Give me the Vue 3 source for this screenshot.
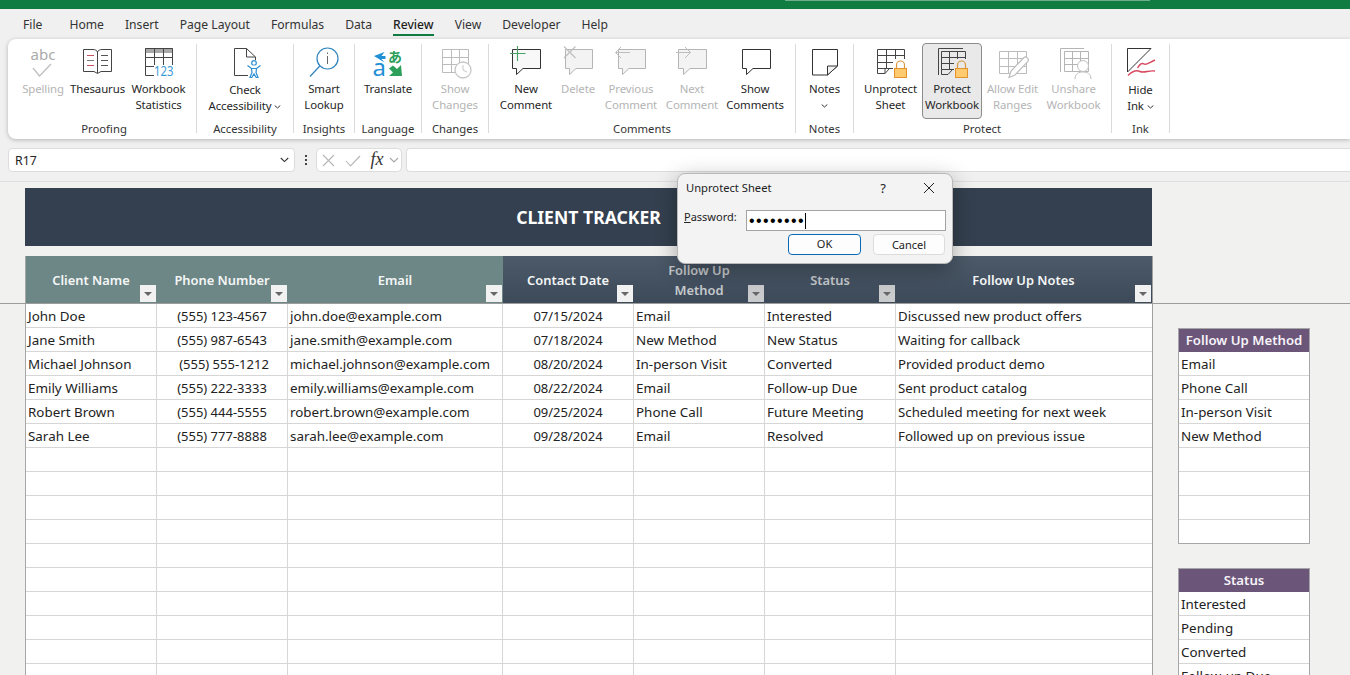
<script setup>
const tabs = ['File','Home','Insert','Page Layout','Formulas','Data','Review','View','Developer','Help']

function grid(x, y, w, h, c, r) {
  let d = `M${x} ${y}H${x + w}V${y + h}H${x}Z`
  for (let i = 1; i < c; i++) { const p = Math.round(x + (w * i) / c - 0.5) + 0.5; d += `M${p} ${y}V${y + h}` }
  for (let i = 1; i < r; i++) { const p = Math.round(y + (h * i) / r - 0.5) + 0.5; d += `M${x} ${p}H${x + w}` }
  return d
}
function bubble(x1, y1, x2, y2, tx) {
  return `M${x1} ${y1}H${x2}V${y2}H${tx + 6.5}L${tx} ${y2 + 6}V${y2}H${x1}Z`
}
const gr = {
  stats: grid(9.5, 4.5, 27, 27, 3, 3),
  changes: grid(9.5, 5.5, 26, 23, 3, 3),
  unprotect: grid(9.5, 5.5, 27, 19, 3, 3),
  protect: grid(11.5, 7.5, 24, 18, 3, 3),
  allow: grid(9.5, 7.5, 27, 22, 3, 3),
  unshare: grid(13.5, 7.5, 24, 20, 3, 3)
}
const bub = {
  add: bubble(8.5, 5.5, 36.5, 24.5, 12.5),
  del: bubble(9.5, 5.5, 36.5, 24.5, 13.5),
  prev: bubble(9.5, 5.5, 36.5, 24.5, 13.5),
  next: bubble(8.5, 5.5, 36.5, 24.5, 13.5),
  show: bubble(9.5, 5.5, 37.5, 24.5, 13.5)
}

const groups = [
  { name:'Proofing', w:189, pl:8, pr:5, gap:0, items:[
    { lines:['Spelling'], w:54, icon:'spell', off:true },
    { lines:['Thesaurus'], w:55, icon:'book' },
    { lines:['Workbook','Statistics'], w:67, icon:'stats' } ] },
  { name:'Accessibility', w:97, pl:0, pr:1, gap:0, items:[
    { lines:['Check','Accessibility'], w:96, icon:'access', low:true, chev:'inline' } ] },
  { name:'Insights', w:61, pl:0, pr:1, gap:0, items:[
    { lines:['Smart','Lookup'], w:60, icon:'lookup' } ] },
  { name:'Language', w:67, pl:0, pr:1, gap:0, items:[
    { lines:['Translate'], w:66, icon:'translate' } ] },
  { name:'Changes', w:67, pl:0, pr:1, gap:0, items:[
    { lines:['Show','Changes'], w:66, icon:'changes', off:true } ] },
  { name:'Comments', w:307, pl:7, pr:8, gap:0, items:[
    { lines:['New','Comment'], w:60, icon:'add' },
    { lines:['Delete'], w:44, icon:'del', off:true },
    { lines:['Previous','Comment'], w:62, icon:'prev', off:true },
    { lines:['Next','Comment'], w:60, icon:'next', off:true },
    { lines:['Show','Comments'], w:66, icon:'show' } ] },
  { name:'Notes', w:58, pl:0, pr:1, gap:0, items:[
    { lines:['Notes'], w:57, icon:'note', chev:'line' } ] },
  { name:'Protect', w:258, pl:6, pr:8, gap:1, items:[
    { lines:['Unprotect','Sheet'], w:61, icon:'unprotect' },
    { lines:['Protect','Workbook'], w:60, icon:'protect', on:true },
    { lines:['Allow Edit','Ranges'], w:59, icon:'allow', off:true },
    { lines:['Unshare','Workbook'], w:61, icon:'unshare', off:true } ] },
  { name:'Ink', w:58, pl:0, pr:1, gap:0, items:[
    { lines:['Hide','Ink'], w:57, icon:'ink', low:true, chev:'inline' } ] }
]
const sw = (b) => 44 + (b.w % 2)

const headers = [
  { t:['Client Name'], c:'teal' },
  { t:['Phone Number'], c:'teal' },
  { t:['Email'], c:'teal' },
  { t:['Contact Date'], c:'slate' },
  { t:['Follow Up','Method'], c:'slate dim' },
  { t:['Status'], c:'slate dim' },
  { t:['Follow Up Notes'], c:'slate' }
]
const data = [
  ['John Doe','(555) 123-4567','john.doe@example.com','07/15/2024','Email','Interested','Discussed new product offers'],
  ['Jane Smith','(555) 987-6543','jane.smith@example.com','07/18/2024','New Method','New Status','Waiting for callback'],
  ['Michael Johnson','(555) 555-1212','michael.johnson@example.com','08/20/2024','In-person Visit','Converted','Provided product demo'],
  ['Emily Williams','(555) 222-3333','emily.williams@example.com','08/22/2024','Email','Follow-up Due','Sent product catalog'],
  ['Robert Brown','(555) 444-5555','robert.brown@example.com','09/25/2024','Phone Call','Future Meeting','Scheduled meeting for next week'],
  ['Sarah Lee','(555) 777-8888','sarah.lee@example.com','09/28/2024','Email','Resolved','Followed up on previous issue']
]
const rows = [...data]
while (rows.length < 16) rows.push(['','','','','','',''])
const side = [
  { title:'Follow Up Method', items:['Email','Phone Call','In-person Visit','New Method','','','',''] },
  { title:'Status', items:['Interested','Pending','Converted','Follow-up Due','','','',''] }
]
</script>

<template>
  <div class="app">
    <div class="titlebar"><div class="searchedge"></div></div>
    <nav class="tabs">
      <div v-for="t in tabs" :key="t" class="tab" :class="{ active: t === 'Review', first: t === 'File' }">{{ t }}</div>
    </nav>

    <section class="ribbon">
      <div v-for="g in groups" :key="g.name" class="group"
           :style="{ width: g.w + 'px', paddingLeft: g.pl + 'px', paddingRight: g.pr + 'px' }">
        <div class="btns" :style="{ gap: g.gap + 'px' }">
          <div v-for="b in g.items" :key="b.icon" class="btn" :class="{ off: b.off, on: b.on, low: b.low }" :style="{ width: b.w + 'px' }">
            <svg class="ico" :width="sw(b)" height="37" :viewBox="`0 0 ${sw(b)} 37`" fill="none">
              <template v-if="b.icon === 'spell'">
                <text x="9.5" y="16" class="abc">abc</text>
                <path d="M12 24L18.5 32L30 20" stroke="#bdbdbd" stroke-width="1.2"/>
              </template>
              <template v-else-if="b.icon === 'book'">
                <path d="M8.5 5.5H18C20 5.5 22 6.5 22.5 8C23 6.5 25 5.5 27 5.5H36.5V27.5H26L22.5 29.5L19 27.5H8.5Z" stroke="#444" fill="#fff"/>
                <path d="M22.5 8V29" stroke="#444"/>
                <path d="M12 11.5H19M12 21.5H19" stroke="#c8505f"/>
                <path d="M12 16.5H19" stroke="#777"/>
                <path d="M26 11.5H33M26 16.5H33M26 21.5H33" stroke="#555"/>
              </template>
              <template v-else-if="b.icon === 'stats'">
                <rect x="9" y="4" width="28" height="5" fill="#a8a8a8"/>
                <path :d="gr.stats" stroke="#444"/>
                <rect x="18" y="21" width="20" height="12" fill="#fff"/>
                <text x="18" y="32" class="nums" textLength="19.5" lengthAdjust="spacingAndGlyphs">123</text>
              </template>
              <template v-else-if="b.icon === 'access'">
                <path d="M32.5 16V13L23.5 4.5H11.5V31.5H25" stroke="#444"/>
                <path d="M23.5 4.5V13H32.5" stroke="#444"/>
                <circle cx="31" cy="19" r="2.3" stroke="#2b8fd2" stroke-width="1.2"/>
                <path d="M24.5 21.5L28.5 24.5H33.5L37.5 21.5M28.5 24.5L29 28.5L27 33.5H28.8L31 30L33.2 33.5H35L33 28.5L33.5 24.5" stroke="#2b8fd2" stroke-width="1.2" fill="#fff"/>
              </template>
              <template v-else-if="b.icon === 'lookup'">
                <circle cx="25.5" cy="14.5" r="10.5" stroke="#2d83bd" stroke-width="1.2"/>
                <path d="M8 32.5L17.8 22" stroke="#2d83bd" stroke-width="1.2"/>
                <path d="M25.5 12V20M25.5 8.5V10" stroke="#666"/>
              </template>
              <template v-else-if="b.icon === 'translate'">
                <polygon points="8,12 18.5,8 15.5,12 19.5,12 19.5,15 15.5,15 18.5,18.5" fill="#1f8fd6"/>
                <text x="6.5" y="32" class="ta">a</text>
                <text x="22" y="17.5" class="tj">あ</text>
                <polygon points="36,32 23,32 27,28.5 23,24.5 27,21.5 31,25 35,21" fill="#2ca05a"/>
              </template>
              <template v-else-if="b.icon === 'changes'">
                <path :d="gr.changes" stroke="#bcbcbc"/>
                <circle cx="30" cy="26" r="8" stroke="#c6c6c6" fill="#fff" stroke-width="1.3"/>
                <path d="M30 21V26L34 28" stroke="#c6c6c6"/>
              </template>
              <template v-else-if="b.icon === 'add'">
                <path :d="bub.add" stroke="#333" fill="#f8f8f8"/>
                <path d="M13.5 2V17M6 9.5H21.5" stroke="#45a262" stroke-width="1.1"/>
              </template>
              <template v-else-if="b.icon === 'del'">
                <path :d="bub.del" stroke="#b5b5b5" fill="#f3f3f3"/>
                <path d="M8 2.5L19.5 14M19.5 2.5L8 14" stroke="#bdbdbd" stroke-width="1.1"/>
              </template>
              <template v-else-if="b.icon === 'prev'">
                <path :d="bub.prev" stroke="#b5b5b5" fill="#f3f3f3"/>
                <path d="M6.5 8.5H21M12 3L6.5 8.5L12 14" stroke="#bdbdbd" fill="none"/>
              </template>
              <template v-else-if="b.icon === 'next'">
                <path :d="bub.next" stroke="#b5b5b5" fill="#f3f3f3"/>
                <path d="M6 8.5H20.5M15 3L20.5 8.5L15 14" stroke="#bdbdbd" fill="none"/>
              </template>
              <template v-else-if="b.icon === 'show'">
                <path :d="bub.show" stroke="#333" fill="#fff"/>
              </template>
              <template v-else-if="b.icon === 'note'">
                <path d="M10.5 5.5H35.5V22L25.5 31H10.5Z" stroke="#333" fill="#fff"/>
                <path d="M25.5 31V22H35.5Z" stroke="#333" fill="#f2f2f2"/>
              </template>
              <template v-else-if="b.icon === 'unprotect'">
                <path :d="gr.unprotect" stroke="#444"/>
                <path d="M9.5 24.5V29.5H17L21.5 24.5M17 29.5V25" stroke="#444"/>
                <rect x="25" y="15" width="15" height="19" fill="#fff"/>
                <path d="M28.5 24V21a4 4 0 0 1 8 0V24" stroke="#d9963f" stroke-width="1.2"/>
                <rect x="26.5" y="24.5" width="12" height="9" fill="#ffcb6e" stroke="#e6922c"/>
              </template>
              <template v-else-if="b.icon === 'protect'">
                <path d="M8.5 31V4.5H33" stroke="#444"/>
                <path :d="gr.protect" stroke="#444"/>
                <path d="M11.5 25.5V30.5H18L22.5 25.5" stroke="#444"/>
                <rect x="24" y="15" width="15" height="19" fill="#e9e9e9"/>
                <path d="M27.5 24V21a4 4 0 0 1 8 0V24" stroke="#d9963f" stroke-width="1.2"/>
                <rect x="25.5" y="24.5" width="12" height="9" fill="#ffcb6e" stroke="#e6922c"/>
              </template>
              <template v-else-if="b.icon === 'allow'">
                <path :d="gr.allow" stroke="#bcbcbc"/>
                <path d="M19 33.5L21 27L33.5 14a2.6 2.6 0 0 1 4 3.8L25 31Z" stroke="#bcbcbc" fill="#fff" stroke-width="1.2"/>
              </template>
              <template v-else-if="b.icon === 'unshare'">
                <path d="M9.5 28V4.5H33" stroke="#b5b5b5"/>
                <path :d="gr.unshare" stroke="#b5b5b5"/>
                <path d="M24 35C24 29.5 28 28 32 28C36 28 40 29.5 40 35" stroke="#c0c0c0" fill="#fff"/>
                <circle cx="32" cy="22" r="5.5" stroke="#c0c0c0" fill="#fff"/>
              </template>
              <template v-else-if="b.icon === 'ink'">
                <path d="M9.5 28V4.5H33Z" stroke="#333" fill="#fff"/>
                <path d="M19.5 24C22 20 24 18.5 26 20C28 21.5 32 18 37 16M10 31.5C14 27.5 18 25.5 22 27.5C26 29.5 31 26 37 27" stroke="#d9485f" stroke-width="1.4"/>
              </template>
            </svg>
            <div class="lbl" :class="{ lowl: b.low }">
              <div v-for="(l, i) in b.lines" :key="i" class="ln">{{ l }}<svg v-if="b.chev === 'inline' && i === b.lines.length - 1" class="chev" width="7" height="4" viewBox="0 0 7 4"><path d="M.7.5L3.5 3L6.3.5" stroke="#333" fill="none"/></svg></div>
              <div v-if="b.chev === 'line'" class="ln"><svg class="chev solo" width="7" height="4" viewBox="0 0 7 4"><path d="M.7.5L3.5 3L6.3.5" stroke="#333" fill="none"/></svg></div>
            </div>
          </div>
        </div>
        <div class="gname">{{ g.name }}</div>
      </div>
    </section>

    <div class="fbar">
      <div class="namebox">
        <span>R17</span>
        <svg width="9" height="6" viewBox="0 0 9 6"><path d="M.8 1L4.5 4.6L8.2 1" stroke="#333" fill="none" stroke-width="1.1"/></svg>
      </div>
      <div class="dots"><i></i><i></i><i></i></div>
      <svg class="funcs" width="86" height="24" viewBox="0 0 86 24" fill="none">
        <rect x=".5" y=".5" width="85" height="23" rx="4" fill="#fff" stroke="#dcdcdc"/>
        <path d="M7 7L18 18M18 7L7 18" stroke="#b5b5b5" stroke-width="1.1"/>
        <path d="M30 13L34.5 18L44 8" stroke="#b5b5b5" stroke-width="1.1"/>
        <text x="54.5" y="17" class="fx">fx</text>
        <path d="M74 10L78 14L82 10" stroke="#a8a8a8" stroke-width="1.1"/>
      </svg>
      <div class="finput"></div>
    </div>

    <main class="sheet">
      <div class="mainc">
        <div class="banner">CLIENT TRACKER</div>
        <div class="table">
          <div class="thead">
            <div v-for="(h, i) in headers" :key="i" class="th" :class="h.c">
              <div v-for="l in h.t" :key="l">{{ l }}</div>
              <span class="filter"><b></b></span>
            </div>
          </div>
          <div v-for="(r, ri) in rows" :key="ri" class="tr">
            <div v-for="(c, ci) in r" :key="ci" class="td" :class="{ ctr: ci === 1 || ci === 3, shift: c === '(555) 555-1212' }">{{ c }}</div>
          </div>
        </div>
      </div>
      <aside class="aside">
        <div v-for="s in side" :key="s.title" class="stable">
          <div class="sh">{{ s.title }}</div>
          <div v-for="(it, i) in s.items" :key="i" class="sr">{{ it }}</div>
        </div>
      </aside>
      <div class="freeze"></div>
    </main>

    <div class="dialog">
      <div class="dhead">
        <div class="dtitle">Unprotect Sheet</div>
        <div class="dctl">?</div>
        <div class="dctl">
          <svg width="12" height="12" viewBox="0 0 12 12"><path d="M1 1L11 11M11 1L1 11" stroke="#222" stroke-width="1"/></svg>
        </div>
      </div>
      <div class="drow">
        <label class="dlabel"><u>P</u>assword:</label>
        <div class="dinput"><span class="pw">••••••••</span></div>
      </div>
      <div class="dbtns">
        <div class="dbtn ok">OK</div>
        <div class="dbtn">Cancel</div>
      </div>
    </div>
  </div>
</template>

<style scoped>
.app { position: relative; width: 1350px; height: 675px; overflow: hidden; background: #f0f0f0; font-family: "Noto Sans", "Open Sans", sans-serif; color: #222; }
.titlebar { height: 9px; background: #107c41; padding-left: 785px; box-sizing: border-box; }
.searchedge { width: 365px; height: 1px; background: #6fae8d; }
.tabs { height: 30px; display: flex; padding-left: 23px; gap: 21px; font-size: 12.15px; align-items: stretch; background: #f0f0f0; }
.tab { position: relative; line-height: 31px; color: #333; }
.tab.first { margin-right: 6px; }
.tab.active { font-weight: 500; color: #1f1f1f; }
.tab.active::after { content: ""; position: absolute; left: 0; right: 0; top: 25px; height: 2px; background: #107c41; }
.ribbon { position: relative; z-index: 2; height: 100px; margin-left: 8px; display: flex; background: #fff; border-radius: 8px 0 0 8px; box-shadow: 0 1px 4px rgba(0,0,0,.25); padding-top: 4px; box-sizing: border-box; }
.group { position: relative; box-sizing: border-box; height: 96px; display: flex; flex-direction: column; flex: none; }
.group::after { content: ""; position: absolute; right: 0; top: 1px; bottom: 6px; width: 1px; background: #dadada; }
.btns { display: flex; height: 76px; }
.btn { box-sizing: border-box; height: 76px; border: 1px solid transparent; border-radius: 4px; display: flex; flex-direction: column; align-items: center; flex: none; }
.btn.on { background: #e9e9e9; border-color: #8c8c8c; }
.ico { flex: none; display: block; overflow: visible; }
.lbl { font-size: 11.4px; letter-spacing: -0.1px; line-height: 16px; text-align: center; white-space: nowrap; color: #262626; }
.lowl { margin-top: 1px; }
.btn.off .lbl { color: #b4b4b4; }
.ln { height: 16px; }
.chev { margin-left: 3px; vertical-align: 1px; }
.chev.solo { margin-left: 0; }
.gname { margin-top: 2px; font-size: 11.3px; line-height: 16px; text-align: center; color: #333; }
.abc { font-size: 15px; fill: #ababab; font-family: "Noto Sans", sans-serif; }
.nums { font-size: 14px; fill: #3d9bd6; font-family: "Noto Sans", sans-serif; }
.ta { font-size: 24px; fill: #1f8fd6; font-family: "Noto Sans", sans-serif; }
.tj { font-size: 14px; fill: #2ca05a; font-family: "Noto Sans CJK JP", sans-serif; font-weight: 700; }
.fx { font-size: 18px; fill: #333; font-style: italic; font-family: "Liberation Serif", serif; }

.fbar { height: 42px; box-sizing: border-box; padding: 9px 0; display: flex; align-items: stretch; background: #f0f0f0; }
.namebox { margin-left: 8px; width: 287px; box-sizing: border-box; background: #fff; border: 1px solid #dcdcdc; border-radius: 4px; display: flex; align-items: center; justify-content: space-between; padding: 0 5px 0 6px; font-size: 12.3px; }
.dots { width: 21px; display: flex; flex-direction: column; align-items: center; justify-content: center; gap: 2px; }
.dots i { width: 2px; height: 2px; background: #444; display: block; }
.funcs { flex: none; display: block; }
.finput { flex: 1; margin-left: 4px; background: #fff; border: 1px solid #dcdcdc; border-right: 0; border-radius: 4px 0 0 4px; }

.sheet { position: relative; height: 494px; box-sizing: border-box; border-top: 1px solid #dedede; display: flex; padding: 6px 0 0 25px; background: #f1f1f0; }
.mainc { width: 1128px; flex: none; }
.banner { width: 1127px; height: 58px; background: #34404f; color: #fff; font-weight: 700; font-size: 17.6px; display: flex; align-items: center; justify-content: center; }
.table { margin-top: 10px; box-sizing: border-box; border-left: 1px solid #a6a6a6; border-right: 1px solid #a0a0a0; background: #fff; }
.thead, .tr { display: grid; grid-template-columns: 131px 131px 215px 131px 131px 131px 256px; }
.thead { height: 48px; }
.th { position: relative; display: flex; flex-direction: column; justify-content: center; align-items: center; color: #f4f6f6; font-weight: 600; font-size: 12.9px; line-height: 20px; padding: 0 1px 1px 0; box-sizing: border-box; }
.th.teal { background: #6d8787; }
.th.slate { background: linear-gradient(#4c5a69, #3c4959); }
.th.dim { color: #c6cacd; }
.filter { position: absolute; right: 1px; bottom: 2px; width: 16px; height: 17px; background: #f1f1f1; display: flex; align-items: center; justify-content: center; }
.th.dim .filter { background: #c9cbcd; }
.filter b { width: 0; height: 0; border-left: 4px solid transparent; border-right: 4px solid transparent; border-top: 4px solid #666; }
.tr { height: 24px; box-sizing: border-box; border-bottom: 1px solid #d6d6d6; }
.td { border-right: 1px solid #d6d6d6; padding-left: 2px; font-size: 13.4px; line-height: 25px; height: 23px; white-space: nowrap; color: #222; }
.td:last-child { border-right: 0; font-size: 13.25px; }
.td.ctr { text-align: center; padding-left: 0; font-size: 13px; }
.td.shift { padding-left: 4px; }
.aside { margin: 140px 0 0 25px; width: 132px; flex: none; display: flex; flex-direction: column; gap: 24px; }
.stable { box-sizing: border-box; border: 1px solid #a6a6a6; background: #fff; }
.sh { height: 23px; background: #6b5578; color: #f6f3f8; font-weight: 600; font-size: 13.2px; line-height: 23px; text-align: center; }
.sr { height: 24px; box-sizing: border-box; border-bottom: 1px solid #d6d6d6; padding-left: 2px; font-size: 13.4px; line-height: 25px; }
.sr:last-child { height: 23px; border-bottom: 0; }
.freeze { position: absolute; left: 0; right: 0; top: 121px; height: 1px; background: #9c9c9c; }

.dialog { position: absolute; z-index: 5; left: 677px; top: 173px; width: 276px; height: 91px; box-sizing: border-box; background: #f3f3f3; border: 1px solid #b9b9b9; border-radius: 8px; box-shadow: 0 6px 22px rgba(0,0,0,.32); font-size: 11.2px; color: #222; }
.dhead { height: 27px; display: flex; align-items: center; }
.dtitle { flex: 1; padding-left: 8px; }
.dctl { width: 46px; display: flex; justify-content: center; align-items: center; font-size: 13px; }
.drow { margin-top: 9px; display: flex; justify-content: space-between; padding: 0 6px; align-items: flex-start; }
.dlabel { font-size: 11px; line-height: 14px; }
.dinput { width: 200px; height: 21px; box-sizing: border-box; background: #fff; border: 1px solid #a3a3a3; padding-left: 2px; display: flex; align-items: center; }
.pw { font-size: 16px; line-height: 16px; color: #000; border-right: 1px solid #000; letter-spacing: 1.4px; font-family: "Liberation Sans", sans-serif; }
.dbtns { margin-top: 3px; display: flex; justify-content: flex-end; gap: 12px; padding-right: 7px; }
.dbtn { width: 72px; height: 21px; box-sizing: border-box; background: #fdfdfd; border: 1px solid #dcdcdc; border-radius: 4px; text-align: center; line-height: 19px; font-size: 11px; }
.dbtn.ok { width: 73px; border: 1.5px solid #0b68b3; line-height: 18px; }
</style>

<style>
html, body { margin: 0; overflow: hidden; }
</style>
